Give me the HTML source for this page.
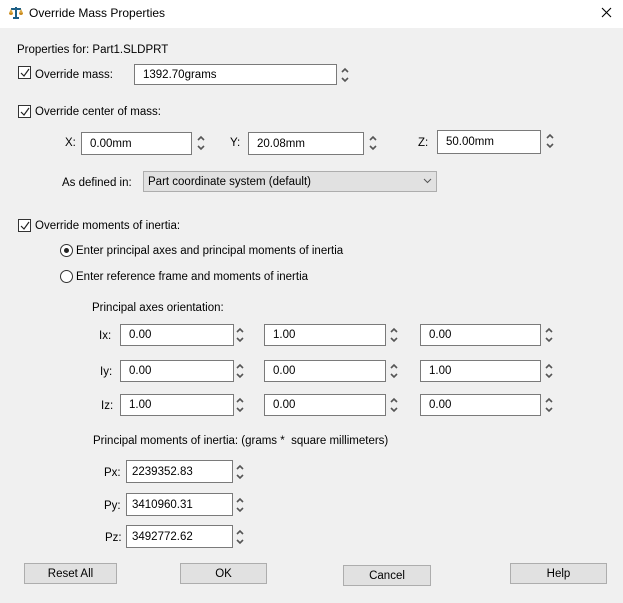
<!DOCTYPE html>
<html><head><style>
*{margin:0;padding:0;box-sizing:border-box}
body{width:623px;height:603px;background:#f0f0f0;font-family:"Liberation Sans",sans-serif;font-size:11.5px;color:#000;position:relative;overflow:hidden}
.a{position:absolute;white-space:nowrap}
.t{position:absolute;white-space:nowrap;line-height:14px}
.in{position:absolute;background:#fff;border:1px solid #7a7a7a;padding:0 0 0 8px;white-space:nowrap;display:flex;align-items:center}
.cb{position:absolute;width:13px;height:13px;border:1px solid #333;background:#fff}
.rd{position:absolute;width:13px;height:13px;border:1px solid #333;border-radius:50%;background:#fff}
.btn{position:absolute;background:#e1e1e1;border:1px solid #adadad;display:flex;align-items:center;justify-content:center}
</style></head><body>
<div class="a" style="left:0;top:0;width:623px;height:28px;background:#fff"></div>
<svg class="a" style="left:8px;top:5px" width="16" height="16" viewBox="0 0 16 16"><path d="M8 2v11M3 4h10M5 13h6" stroke="#1d5f86" stroke-width="2" fill="none"/><path d="M1 8l2-4 2 4z M11 8l2-4 2 4z" fill="#d9a640"/><path d="M1 8h4a2 2 0 0 1-4 0zM11 8h4a2 2 0 0 1-4 0z" fill="#c98a20"/></svg>
<div class="t" style="left:29px;top:6px;font-size:12px">Override Mass Properties</div>
<svg class="a" style="left:601px;top:7px" width="11" height="11"><path d="M1 1l9 9M10 1l-9 9" stroke="#000" stroke-width="1.1"/></svg>

<div class="t" style="left:17px;top:43px">Properties for: Part1.SLDPRT</div>
<div class="cb" style="left:18px;top:66px"></div><svg class="a" style="left:19px;top:67px" width="12" height="12"><path d="M2 6l3 3 5-7" stroke="#222" fill="none" stroke-width="1.2"/></svg>
<div class="t" style="left:35px;top:68px">Override mass:</div>
<div class="in" style="left:134px;top:64px;width:203px;height:21px">1392.70grams</div>

<div class="cb" style="left:18px;top:105px"></div><svg class="a" style="left:19px;top:106px" width="12" height="12"><path d="M2 6l3 3 5-7" stroke="#222" fill="none" stroke-width="1.2"/></svg>
<div class="t" style="left:35px;top:105px">Override center of mass:</div>
<div class="t" style="left:65px;top:136px">X:</div><div class="in" style="left:81px;top:132px;width:111px;height:23px">0.00mm</div>
<div class="t" style="left:230px;top:136px">Y:</div><div class="in" style="left:248px;top:132px;width:116px;height:23px">20.08mm</div>
<div class="t" style="left:418px;top:136px">Z:</div><div class="in" style="left:437px;top:130px;width:104px;height:24px">50.00mm</div>
<div class="t" style="left:62px;top:176px">As defined in:</div>
<div class="a" style="left:143px;top:171px;width:294px;height:21px;background:#e1e1e1;border:1px solid #adadad;padding-left:4px;display:flex;align-items:center">Part coordinate system (default)</div>
<svg class="a" style="left:423px;top:178px" width="9" height="6"><path d="M1 1l3.5 3.5L8 1" stroke="#555" fill="none"/></svg>

<div class="cb" style="left:18px;top:219px"></div><svg class="a" style="left:19px;top:220px" width="12" height="12"><path d="M2 6l3 3 5-7" stroke="#222" fill="none" stroke-width="1.2"/></svg>
<div class="t" style="left:35px;top:219px">Override moments of inertia:</div>
<div class="rd" style="left:60px;top:244px"></div><div class="a" style="left:64px;top:248px;width:5px;height:5px;border-radius:50%;background:#222"></div>
<div class="t" style="left:76px;top:244px">Enter principal axes and principal moments of inertia</div>
<div class="rd" style="left:60px;top:270px"></div>
<div class="t" style="left:76px;top:270px">Enter reference frame and moments of inertia</div>

<div class="t" style="left:92px;top:301px">Principal axes orientation:</div>
<div class="t" style="left:99px;top:329px">Ix:</div>
<div class="t" style="left:100px;top:365px">Iy:</div>
<div class="t" style="left:101px;top:399px">Iz:</div>
<div class="in" style="left:120px;top:324px;width:114px;height:22px">0.00</div>
<div class="in" style="left:264px;top:324px;width:122px;height:22px">1.00</div>
<div class="in" style="left:420px;top:324px;width:121px;height:22px">0.00</div>
<div class="in" style="left:120px;top:360px;width:114px;height:22px">0.00</div>
<div class="in" style="left:264px;top:360px;width:122px;height:22px">0.00</div>
<div class="in" style="left:420px;top:360px;width:121px;height:22px">1.00</div>
<div class="in" style="left:120px;top:394px;width:114px;height:22px">1.00</div>
<div class="in" style="left:264px;top:394px;width:122px;height:22px">0.00</div>
<div class="in" style="left:420px;top:394px;width:121px;height:22px">0.00</div>

<div class="t" style="left:93px;top:434px">Principal moments of inertia: (grams *&nbsp; square millimeters)</div>
<div class="t" style="left:104px;top:466px">Px:</div>
<div class="t" style="left:104px;top:499px">Py:</div>
<div class="t" style="left:105px;top:531px">Pz:</div>
<div class="in" style="left:126px;top:460px;width:107px;height:23px;padding-left:5px">2239352.83</div>
<div class="in" style="left:126px;top:493px;width:107px;height:23px;padding-left:5px">3410960.31</div>
<div class="in" style="left:126px;top:525px;width:107px;height:23px;padding-left:5px">3492772.62</div>

<div class="btn" style="left:24px;top:563px;width:93px;height:21px">Reset All</div>
<div class="btn" style="left:180px;top:563px;width:87px;height:21px">OK</div>
<div class="btn" style="left:343px;top:565px;width:88px;height:21px">Cancel</div>
<div class="btn" style="left:510px;top:563px;width:97px;height:21px">Help</div>

<svg class="a" style="left:0;top:0" width="623" height="603">
<defs><g id="s"><path d="M1 5l3-3 3 3M1 11l3 3 3-3" stroke="#555" stroke-width="1.6" fill="none"/></g></defs>
<use href="#s" x="341" y="67"/>
<use href="#s" x="197" y="135"/>
<use href="#s" x="369" y="135"/>
<use href="#s" x="546" y="133"/>
<use href="#s" x="236" y="327"/><use href="#s" x="390" y="327"/><use href="#s" x="545" y="327"/>
<use href="#s" x="236" y="363"/><use href="#s" x="390" y="363"/><use href="#s" x="545" y="363"/>
<use href="#s" x="236" y="397"/><use href="#s" x="390" y="397"/><use href="#s" x="545" y="397"/>
<use href="#s" x="236" y="464"/><use href="#s" x="236" y="497"/><use href="#s" x="236" y="529"/>
</svg>
</body></html>
